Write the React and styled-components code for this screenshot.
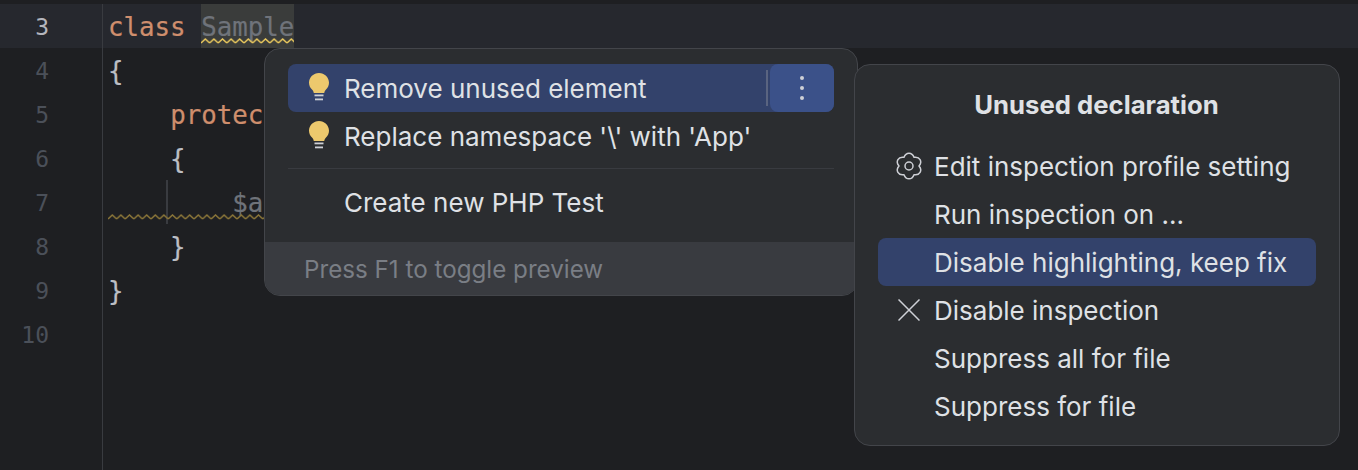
import React from "react"
import styled, { createGlobalStyle } from "styled-components"

const GlobalStyle = createGlobalStyle`
  html, body { margin: 0; padding: 0; background: #1e1f22; }
  body { overflow: hidden; }
`

const lines = [3, 4, 5, 6, 7, 8, 9, 10]

const Wave = ({ id, color, className }) => (
  <WaveSvg className={className} height="6">
    <defs>
      <pattern id={id} width="8.6" height="6" patternUnits="userSpaceOnUse">
        <path d="M0 5 L4.300 1 L8.600 5" fill="none" stroke={color} strokeWidth="1.500" />
      </pattern>
    </defs>
    <rect width="100%" height="6" fill={`url(#${id})`} />
  </WaveSvg>
)

const Bulb = () => (
  <svg width="20" height="29" viewBox="0 0 20 29">
    <path d="M10 0C4.500 0 0 4.300 0 9.700c0 3 1.400 5.200 3 6.900 1 1 1.500 2.100 1.800 3.400h10.400c.3-1.300.8-2.400 1.800-3.400 1.600-1.700 3-3.900 3-6.900C20 4.300 15.500 0 10 0z" fill="#edc96d" />
    <rect x="5.500" y="21.500" width="9" height="1.800" fill="#ced0d6" />
    <rect x="6" y="25.500" width="8" height="1.800" fill="#ced0d6" />
  </svg>
)

const Kebab = () => (
  <svg width="4" height="24" viewBox="0 0 4 24">
    <circle cx="2" cy="2" r="2" fill="#ced0d6" />
    <circle cx="2" cy="12" r="2" fill="#ced0d6" />
    <circle cx="2" cy="22" r="2" fill="#ced0d6" />
  </svg>
)

const Gear = () => (
  <svg width="28" height="28" viewBox="0 0 28 28" fill="none" stroke="#ced0d6" strokeWidth="1.500">
    <path
      d="M9 5.340C10.980 -.18 17.020 -.18 19 5.340C24.770 4.300 27.790 9.520 24 14C27.790 18.480 24.770 23.700 19 22.660C17.020 28.180 10.980 28.180 9 22.660C3.230 23.700 .21 18.480 4 14C.21 9.520 3.230 4.300 9 5.340Z"
      strokeLinejoin="round"
    />
    <circle cx="14" cy="14" r="4" />
  </svg>
)

const Cross = () => (
  <svg width="22" height="22" viewBox="0 0 22 22" stroke="#ced0d6" strokeWidth="1.500">
    <path d="M0.500 0.500L21.500 21.500M21.500 0.500L0.500 21.500" />
  </svg>
)

const App = () => {
  return (
    <Page>
      <GlobalStyle />
      <Gutter>
        {lines.map((n) => (
          <LineNo key={n} $active={n === 3}>{n}</LineNo>
        ))}
      </Gutter>
      <Code>
        <CodeLine $active>
          <Keyword>class</Keyword>{" "}
          <Unused>Sample<SampleWave id="w1" color="#e8c75c" /></Unused>
        </CodeLine>
        <CodeLine>{"{"}</CodeLine>
        <CodeLine>{"    "}<Keyword>protected</Keyword></CodeLine>
        <CodeLine>{"    {"}</CodeLine>
        <CodeLine>
          <Guide />
          {"        "}<Dim>$a</Dim>
          <LongWave id="w2" color="#8a7538" />
        </CodeLine>
        <CodeLine>{"    }"}</CodeLine>
        <CodeLine>{"}"}</CodeLine>
        <CodeLine />
      </Code>

      <ActionsPopup>
        <ActionList>
          <ActionRow $selected>
            <IconSlot><Bulb /></IconSlot>
            <RowText>Remove unused element</RowText>
            <RowDivider />
            <MoreButton><Kebab /></MoreButton>
          </ActionRow>
          <ActionRow>
            <IconSlot><Bulb /></IconSlot>
            <RowText>Replace namespace '\' with 'App'</RowText>
          </ActionRow>
          <Separator />
          <ActionRow>
            <IconSlot />
            <RowText>Create new PHP Test</RowText>
          </ActionRow>
        </ActionList>
        <Footer>Press F1 to toggle preview</Footer>
      </ActionsPopup>

      <SubPopup>
        <SubTitle>Unused declaration</SubTitle>
        <ActionRow>
          <IconSlot><Gear /></IconSlot>
          <RowText>Edit inspection profile setting</RowText>
        </ActionRow>
        <ActionRow>
          <IconSlot />
          <RowText>Run inspection on ...</RowText>
        </ActionRow>
        <ActionRow $selected>
          <IconSlot />
          <RowText>Disable highlighting, keep fix</RowText>
        </ActionRow>
        <ActionRow>
          <IconSlot><Cross /></IconSlot>
          <RowText>Disable inspection</RowText>
        </ActionRow>
        <ActionRow>
          <IconSlot />
          <RowText>Suppress all for file</RowText>
        </ActionRow>
        <ActionRow>
          <IconSlot />
          <RowText>Suppress for file</RowText>
        </ActionRow>
      </SubPopup>
    </Page>
  )
}

export default App

const Page = styled.div`
  position: relative;
  display: flex;
  width: 1358px;
  height: 470px;
  padding-top: 4px;
  box-sizing: border-box;
  overflow: hidden;
  background: #1e1f22;
`

const Gutter = styled.div`
  width: 102px;
  flex-shrink: 0;
  border-right: 1.5px solid #393b40;
  font-family: "DejaVu Sans Mono", monospace;
  font-size: 23px;
`

const LineNo = styled.div`
  height: 44px;
  line-height: 46px;
  text-align: right;
  padding-right: 53px;
  color: ${(p) => (p.$active ? "#b4b6bd" : "#4b5059")};
  background: ${(p) => (p.$active ? "#26282e" : "transparent")};
`

const Code = styled.div`
  flex: 1;
  font-family: "DejaVu Sans Mono", monospace;
  font-size: 25.800px;
  color: #bcbec4;
  -webkit-text-stroke: 0.2px currentColor;
`

const CodeLine = styled.div`
  position: relative;
  height: 44px;
  line-height: 46px;
  padding-left: 5px;
  white-space: pre;
  background: ${(p) => (p.$active ? "#26282e" : "transparent")};
`

const Keyword = styled.span`
  color: #cf8e6d;
`

const Dim = styled.span`
  color: #6f737a;
`

const Unused = styled.span`
  position: relative;
  display: inline-block;
  height: 44px;
  color: #6f737a;
  background: #3a3c3b;
`

const WaveSvg = styled.svg`
  position: absolute;
  display: block;
`

const SampleWave = styled(Wave)`
  left: 0;
  right: 0;
  top: 34px;
  width: 100%;
`

const LongWave = styled(Wave)`
  left: 5px;
  top: 34px;
  width: 160px;
`

const Guide = styled.span`
  position: absolute;
  left: 63px;
  top: 0;
  width: 1.500px;
  height: 44px;
  background: #393b40;
`

const ActionsPopup = styled.div`
  position: absolute;
  left: 264px;
  top: 48px;
  width: 594px;
  height: 248px;
  box-sizing: border-box;
  display: flex;
  flex-direction: column;
  background: #2b2d30;
  border: 1.500px solid #43454a;
  border-radius: 16px;
  overflow: hidden;
`

const ActionList = styled.div`
  flex: 1;
  padding: 14.500px 23.500px 0 22.500px;
`

const ActionRow = styled.div`
  display: flex;
  align-items: center;
  height: 48px;
  border-radius: 8px;
  background: ${(p) => (p.$selected ? "#33426b" : "transparent")};
`

const IconSlot = styled.span`
  display: flex;
  align-items: center;
  justify-content: center;
  width: 62px;
  margin-right: -5.500px;
  flex-shrink: 0;
`

const RowText = styled.span`
  flex: 1;
  font-family: "Inter", sans-serif;
  font-size: 26px;
  color: #dfe1e5;
  white-space: nowrap;

  ${ActionList} & {
    padding-top: 2px;
  }
`

const RowDivider = styled.span`
  width: 1.500px;
  height: 36px;
  margin-right: 2px;
  background: #5a6480;
`

const MoreButton = styled.span`
  display: flex;
  align-items: center;
  justify-content: center;
  width: 64px;
  height: 48px;
  border-radius: 8px;
  background: #3b5189;
`

const Separator = styled.div`
  height: 1.500px;
  margin: 8px 0 8px;
  background: #393b40;
`

const Footer = styled.div`
  height: 53px;
  line-height: 55px;
  padding-left: 39px;
  font-family: "Inter", sans-serif;
  font-size: 24.200px;
  color: #7a7e85;
  background: #393b40;
`

const SubPopup = styled.div`
  position: absolute;
  left: 854px;
  top: 64px;
  width: 486px;
  height: 382px;
  box-sizing: border-box;
  padding: 0 23.500px 0 22.500px;
  background: #2b2d30;
  border: 1.500px solid #43454a;
  border-radius: 16px;
`

const SubTitle = styled.div`
  height: 77px;
  line-height: 80px;
  text-align: center;
  font-family: "Inter", sans-serif;
  font-weight: 700;
  font-size: 25.700px;
  color: #dfe1e5;
`
